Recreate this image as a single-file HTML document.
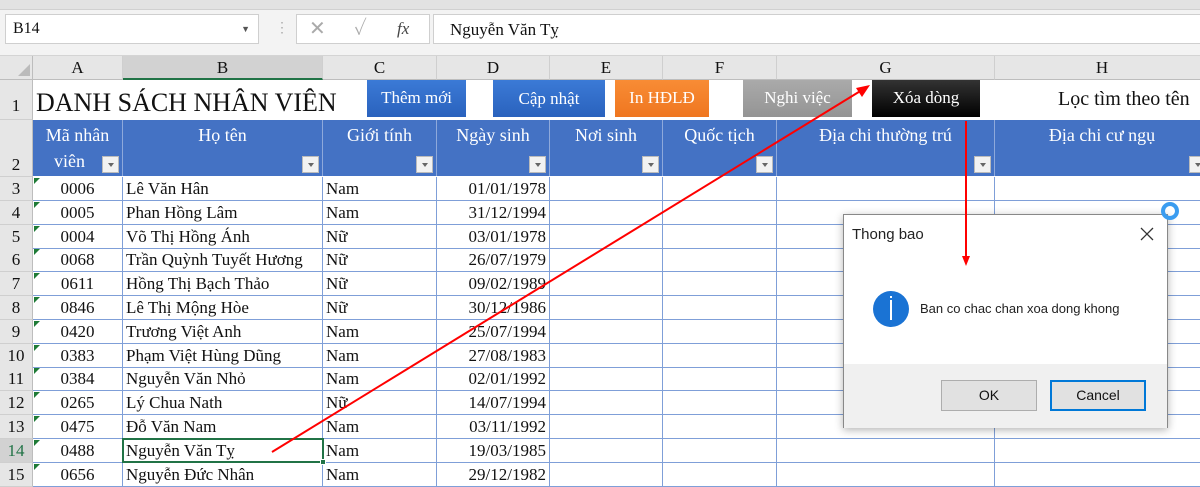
<!DOCTYPE html>
<html><head><meta charset="utf-8"><style>
*{margin:0;padding:0;box-sizing:border-box}
body{width:1200px;height:474px;overflow:hidden;background:#fff;position:relative;font-family:"Liberation Serif","Noto Serif CJK SC",serif;color:#111}
.a{position:absolute}
.top{left:0;top:0;width:1200px;height:56px;background:#f3f3f3;border-bottom:1px solid #d4d4d4}
.box{background:#fff;border:1px solid #cfcfcf}
.ch{top:56px;height:24px;background:#e6e6e6;border-right:1px solid #cfcfcf;border-bottom:1px solid #bdbdbd;text-align:center;font-size:17px;line-height:24px}
.rh{left:0;width:33px;background:#e6e6e6;border-bottom:1px solid #cfcfcf;border-right:1px solid #bdbdbd;text-align:center;font-size:17px}
.hd{top:120px;height:56px;background:#4472c4;color:#fff;font-size:18px;text-align:center;border-right:1px solid #8ea9db;line-height:26px;padding-top:2px}
.dd{position:absolute;right:3px;bottom:3px;width:17px;height:17px;background:#f2f2f2;border:1px solid #bbb}
.dd:after{content:"";position:absolute;left:5px;top:6px;border-left:3px solid transparent;border-right:3px solid transparent;border-top:4px solid #666}
.btn{top:80px;height:37px;color:#fff;font-size:17px;text-align:center;line-height:36px}
.c{height:24px;font-size:17px;line-height:24px;border-right:1px solid #7f9fd8;border-bottom:1px solid #7f9fd8;white-space:nowrap;overflow:hidden}
.tri{position:absolute;left:34px;width:0;height:0;border-top:6px solid #1e7a36;border-right:6px solid transparent}
.dlg{font-family:"Liberation Sans","DejaVu Sans",sans-serif}
</style></head><body>
<div class="a top"></div>
<div class="a" style="left:0;top:0;width:1200px;height:10px;background:#e2e2e2;border-bottom:1px solid #d0d0d0"></div>
<div class="a box" style="left:5px;top:14px;width:254px;height:30px;font-size:16px;line-height:28px;padding-left:7px">B14<span style="position:absolute;right:8px;top:0;font-size:9px;color:#555">▼</span></div>
<div class="a" style="left:275px;top:20px;color:#aaa;font-size:14px">⋮</div>
<div class="a box" style="left:296px;top:14px;width:134px;height:30px;color:#aaa;font-size:20px;line-height:28px"><span style="position:absolute;left:12px">✕</span><span style="position:absolute;left:57px">✓</span><span style="position:absolute;left:100px;color:#444;font-style:italic;font-size:17px">fx</span></div>
<div class="a box" style="left:433px;top:14px;width:770px;height:30px;font-size:17px;line-height:30px;padding-left:16px">Nguyễn Văn Tỵ</div>
<div class="a" style="left:0;top:56px;width:33px;height:24px;background:#e6e6e6;border-right:1px solid #bdbdbd;border-bottom:1px solid #bdbdbd"></div>
<div class="a" style="left:18px;top:64px;border-left:12px solid transparent;border-bottom:12px solid #bbb"></div>
<div class="a ch" style="left:33px;width:90px">A</div>
<div class="a ch" style="left:123px;width:200px;background:#d2d2d2;border-bottom:2px solid #217346">B</div>
<div class="a ch" style="left:323px;width:114px">C</div>
<div class="a ch" style="left:437px;width:113px">D</div>
<div class="a ch" style="left:550px;width:113px">E</div>
<div class="a ch" style="left:663px;width:114px">F</div>
<div class="a ch" style="left:777px;width:218px">G</div>
<div class="a ch" style="left:995px;width:215px">H</div>
<div class="a rh" style="top:80px;height:40px;line-height:52px">1</div>
<div class="a rh" style="top:120px;height:57px;line-height:90px">2</div>
<div id="rhs"></div>
<div class="a" style="left:36px;top:85px;font-size:26px;line-height:36px">DANH SÁCH NHÂN VIÊN</div>
<div class="a btn" style="left:367px;width:99px;background:linear-gradient(#3b7ad6,#2a62bd)">Thêm mới</div>
<div class="a btn" style="left:493px;width:112px;background:linear-gradient(#3b7ad6,#2a62bd);line-height:38px">Cập nhật</div>
<div class="a btn" style="left:615px;width:94px;background:linear-gradient(#f88c35,#ef7620)">In HĐLĐ</div>
<div class="a btn" style="left:743px;width:109px;background:linear-gradient(#aaa,#949494)">Nghi việc</div>
<div class="a btn" style="left:872px;width:108px;background:linear-gradient(#333,#000)">Xóa dòng</div>
<div class="a" style="left:1058px;top:88px;font-size:20px">Lọc tìm theo tên</div>
<div class="a hd" style="left:33px;width:90px">Mã nhân<br><span style="position:relative;left:-8px">viên</span><span class="dd"></span></div>
<div class="a hd" style="left:123px;width:200px">Họ tên<span class="dd"></span></div>
<div class="a hd" style="left:323px;width:114px">Giới tính<span class="dd"></span></div>
<div class="a hd" style="left:437px;width:113px">Ngày sinh<span class="dd"></span></div>
<div class="a hd" style="left:550px;width:113px">Nơi sinh<span class="dd"></span></div>
<div class="a hd" style="left:663px;width:114px">Quốc tịch<span class="dd"></span></div>
<div class="a hd" style="left:777px;width:218px">Địa chi thường trú<span class="dd"></span></div>
<div class="a hd" style="left:995px;width:215px">Địa chi cư ngụ<span class="dd"></span></div>
<div id="rows"></div>
<script>
var d=[["0006","Lê Văn Hân","Nam","01/01/1978"],["0005","Phan Hồng Lâm","Nam","31/12/1994"],["0004","Võ Thị Hồng Ánh","Nữ","03/01/1978"],["0068","Trần Quỳnh Tuyết Hương","Nữ","26/07/1979"],["0611","Hồng Thị Bạch Thảo","Nữ","09/02/1989"],["0846","Lê Thị Mộng Hòe","Nữ","30/12/1986"],["0420","Trương Việt Anh","Nam","25/07/1994"],["0383","Phạm Việt Hùng Dũng","Nam","27/08/1983"],["0384","Nguyễn Văn Nhỏ","Nam","02/01/1992"],["0265","Lý Chua Nath","Nữ","14/07/1994"],["0475","Đỗ Văn Nam","Nam","03/11/1992"],["0488","Nguyễn Văn Tỵ","Nam","19/03/1985"],["0656","Nguyễn Đức Nhân","Nam","29/12/1982"]];
var h="",r="";
for(var i=0;i<d.length;i++){var t=177+i*23.8;
r+='<div class="a rh" style="top:'+t+'px;height:24px;line-height:24px;'+(i==11?'background:#d2d2d2;color:#217346':'')+'">'+(i+3)+'</div>';
var cols=[[33,90,'center',d[i][0]],[123,200,'left',d[i][1]],[323,114,'left',d[i][2]],[437,113,'right',d[i][3]],[550,113,'',''],[663,114,'',''],[777,218,'',''],[995,215,'','']];
cols.forEach(function(c){h+='<div class="a c" style="left:'+c[0]+'px;top:'+t+'px;width:'+c[1]+'px;text-align:'+c[2]+';padding:0 3px">'+c[3]+'</div>'});
h+='<div class="tri" style="top:'+(t+1)+'px"></div>';}
document.getElementById("rows").innerHTML=h;document.getElementById("rhs").innerHTML=r;
</script>
<div class="a" style="left:122px;top:438px;width:202px;height:25px;border:2px solid #217346"></div>
<div class="a" style="left:320px;top:459px;width:6px;height:6px;background:#217346;border:1px solid #fff"></div>
<div class="a dlg" style="left:843px;top:214px;width:325px;height:214px;background:#fff;border:1px solid #888;box-shadow:0 2px 8px rgba(0,0,0,.3)">
<div class="a" style="left:8px;top:11px;font-size:15px;color:#222">Thong bao</div>
<svg class="a" style="left:296px;top:12px" width="14" height="14"><path d="M1 1L13 13M13 1L1 13" stroke="#333" stroke-width="1.3"/></svg>
<div class="a" style="left:29px;top:76px;width:36px;height:36px;border-radius:50%;background:#1a73d4"><div style="position:absolute;left:17px;top:9px;width:2px;height:20px;background:#fff"></div><div style="position:absolute;left:17px;top:5px;width:2px;height:2px;background:#fff"></div></div>
<div class="a" style="left:76px;top:86px;font-size:13px;color:#222">Ban co chac chan xoa dong khong</div>
<div class="a" style="left:0;top:149px;width:323px;height:64px;background:#f0f0f0"></div>
<div class="a" style="left:97px;top:165px;width:96px;height:31px;background:#e1e1e1;border:1px solid #adadad;text-align:center;line-height:29px;font-size:14px">OK</div>
<div class="a" style="left:206px;top:165px;width:96px;height:31px;background:#e1e1e1;border:2px solid #0078d7;text-align:center;line-height:27px;font-size:14px">Cancel</div>
</div>
<div class="a" style="left:1161px;top:202px;width:18px;height:18px;border-radius:50%;border:4px solid #3a9cf0"></div>
<svg class="a" style="left:0;top:0" width="1200" height="474">
<line x1="272" y1="452" x2="862" y2="90" stroke="#f00" stroke-width="2"/>
<polygon points="870,85 856,88 862,97" fill="#f00"/>
<line x1="966" y1="121" x2="966" y2="258" stroke="#f00" stroke-width="2"/>
<polygon points="962,256 970,256 966,266" fill="#f00"/>
</svg>
</body></html>
